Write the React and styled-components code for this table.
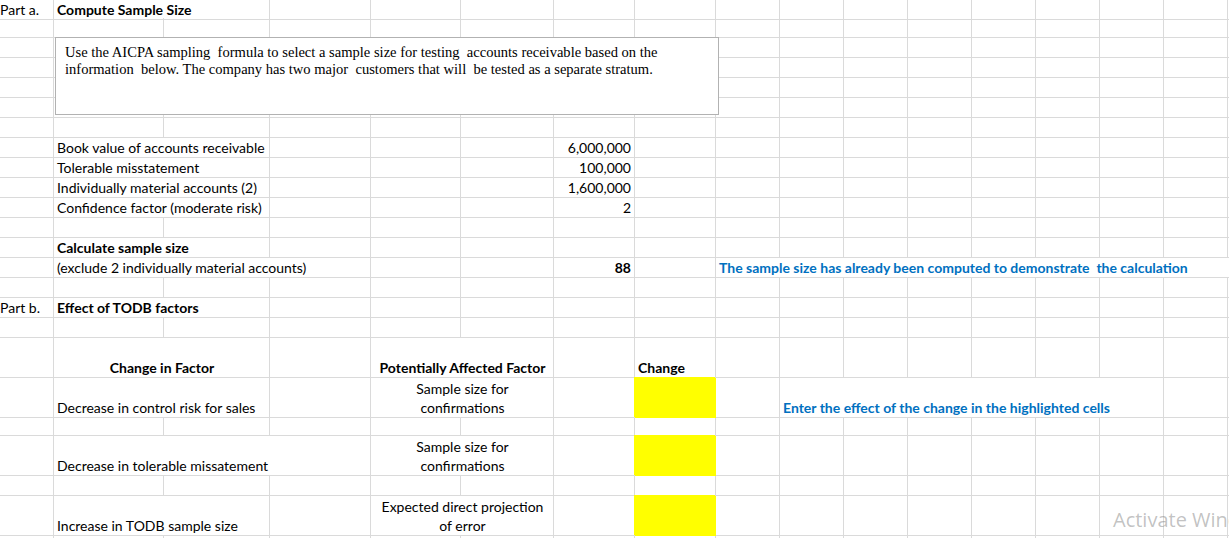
import React from 'react'
import styled, { createGlobalStyle } from 'styled-components'

const GRID = '#dadada'
const BLUE = '#0070c0'
const COLS = [54, 110, 106, 101, 90, 93, 81, 81, 64, 64, 64, 64, 64, 64, 64, 64, 64]

const GlobalStyle = createGlobalStyle`
  html, body {
    margin: 0;
    padding: 0;
    background: #fff;
    overflow: hidden;
  }
  body {
    font-family: Lato, "Liberation Sans", sans-serif;
  }
`

const Sheet = styled.div`
  position: relative;
  width: 1229px;
  height: 538px;
  overflow: hidden;
`

const Row = styled.div`
  display: grid;
  grid-template-columns: ${COLS.map(w => w + 'px').join(' ')};
  height: ${({ h }) => h}px;
`

const Cell = styled.div`
  box-sizing: border-box;
  grid-column: span ${({ span }) => span || 1};
  border-right: 1px solid ${({ fill }) => fill || GRID};
  border-bottom: 1px solid ${({ fill }) => fill || GRID};
  background: ${({ fill }) => fill || 'transparent'};
  box-shadow: ${({ fill }) => (fill ? `-1px -1px 0 ${fill}` : 'none')};
  display: flex;
  flex-direction: column;
  justify-content: flex-end;
  align-items: ${({ align }) =>
    align === 'right' ? 'flex-end' : align === 'center' ? 'center' : 'flex-start'};
  text-align: ${({ align }) => align || 'left'};
  padding: 0 ${({ align }) => (align === 'right' ? 3 : 2)}px 0 ${({ pad }) => (pad == null ? 3 : pad)}px;
  font-size: 14px;
  line-height: 19px;
  font-weight: ${({ bold }) => (bold ? 700 : 400)};
  color: ${({ color }) => color || '#000'};
  white-space: ${({ wrap }) => (wrap ? 'normal' : 'nowrap')};
`

const TextBox = styled.div`
  position: absolute;
  left: 55px;
  top: 37px;
  width: 664px;
  height: 78px;
  box-sizing: border-box;
  border: 1px solid #b2b2b2;
  background: #fff;
  padding: 6px 0 0 9px;
  font-family: "Liberation Serif", "Times New Roman", serif;
  font-size: 14.55px;
  line-height: 17px;
  color: #000;
`

const BoxLine = styled.div`
  white-space: pre;
`

const Watermark = styled.div`
  position: absolute;
  left: 1113px;
  top: 506px;
  font-family: "Open Sans", "Noto Sans", sans-serif;
  font-size: 20px;
  color: rgba(120, 120, 120, 0.45);
  white-space: nowrap;
  pointer-events: none;
`

const rows = [
  { h: 18, cells: [
    { c: 0, text: 'Part a.', pad: 0 },
    { c: 1, span: 2, text: 'Compute Sample Size', bold: true },
  ] },
  { h: 20 }, { h: 20 }, { h: 20 }, { h: 20 }, { h: 20 }, { h: 20 },
  { h: 20, cells: [
    { c: 1, span: 2, text: 'Book value of accounts receivable' },
    { c: 6, text: '6,000,000', align: 'right' },
  ] },
  { h: 20, cells: [
    { c: 1, span: 2, text: 'Tolerable misstatement' },
    { c: 6, text: '100,000', align: 'right' },
  ] },
  { h: 20, cells: [
    { c: 1, span: 2, text: 'Individually material accounts (2)' },
    { c: 6, text: '1,600,000', align: 'right' },
  ] },
  { h: 20, cells: [
    { c: 1, span: 2, text: 'Confidence factor (moderate risk)' },
    { c: 6, text: '2', align: 'right' },
  ] },
  { h: 20 },
  { h: 20, cells: [
    { c: 1, span: 2, text: 'Calculate sample size', bold: true },
  ] },
  { h: 20, cells: [
    { c: 1, span: 3, text: '(exclude 2 individually material accounts)' },
    { c: 6, text: '88', align: 'right', bold: true },
    { c: 8, span: 9, text: 'The sample size has already been computed to demonstrate \u00a0the calculation', bold: true, color: BLUE },
  ] },
  { h: 20 },
  { h: 20, cells: [
    { c: 0, text: 'Part b.', pad: 0 },
    { c: 1, span: 2, text: 'Effect of TODB factors', bold: true },
  ] },
  { h: 20 },
  { h: 40, cells: [
    { c: 1, span: 2, text: 'Change in Factor', bold: true, align: 'center' },
    { c: 4, span: 2, text: 'Potentially Affected Factor', bold: true, align: 'center' },
    { c: 7, text: 'Change', bold: true },
  ] },
  { h: 40, cells: [
    { c: 1, span: 2, text: 'Decrease in control risk for sales' },
    { c: 4, span: 2, text: 'Sample size for confirmations', align: 'center', wrap: true },
    { c: 7, fill: '#ffff00' },
    { c: 9, span: 6, text: 'Enter the effect of the change in the highlighted cells', bold: true, color: BLUE },
  ] },
  { h: 18 },
  { h: 40, cells: [
    { c: 1, span: 3, text: 'Decrease in tolerable missatement' },
    { c: 4, span: 2, text: 'Sample size for confirmations', align: 'center', wrap: true },
    { c: 7, fill: '#ffff00' },
  ] },
  { h: 20 },
  { h: 40, cells: [
    { c: 1, span: 2, text: 'Increase in TODB sample size' },
    { c: 4, span: 2, text: 'Expected direct projection of error', align: 'center', wrap: true },
    { c: 7, fill: '#ffff00' },
  ] },
  { h: 20 },
]

function SheetRow({ h, cells = [] }) {
  const out = []
  let c = 0
  while (c < COLS.length) {
    const cell = cells.find(x => x.c === c)
    if (cell) {
      const { text, c: col, ...rest } = cell
      out.push(<Cell key={c} {...rest}>{text && <span>{text}</span>}</Cell>)
      c += cell.span || 1
    } else {
      out.push(<Cell key={c} />)
      c += 1
    }
  }
  return <Row h={h}>{out}</Row>
}

export default function App() {
  return (
    <>
      <GlobalStyle />
      <Sheet>
        {rows.map((r, i) => <SheetRow key={i} {...r} />)}
        <TextBox>
          <BoxLine>Use the AICPA sampling  formula to select a sample size for testing  accounts receivable based on the</BoxLine>
          <BoxLine>information  below. The company has two major  customers that will  be tested as a separate stratum.</BoxLine>
        </TextBox>
        <Watermark>Activate Windows</Watermark>
      </Sheet>
    </>
  )
}
